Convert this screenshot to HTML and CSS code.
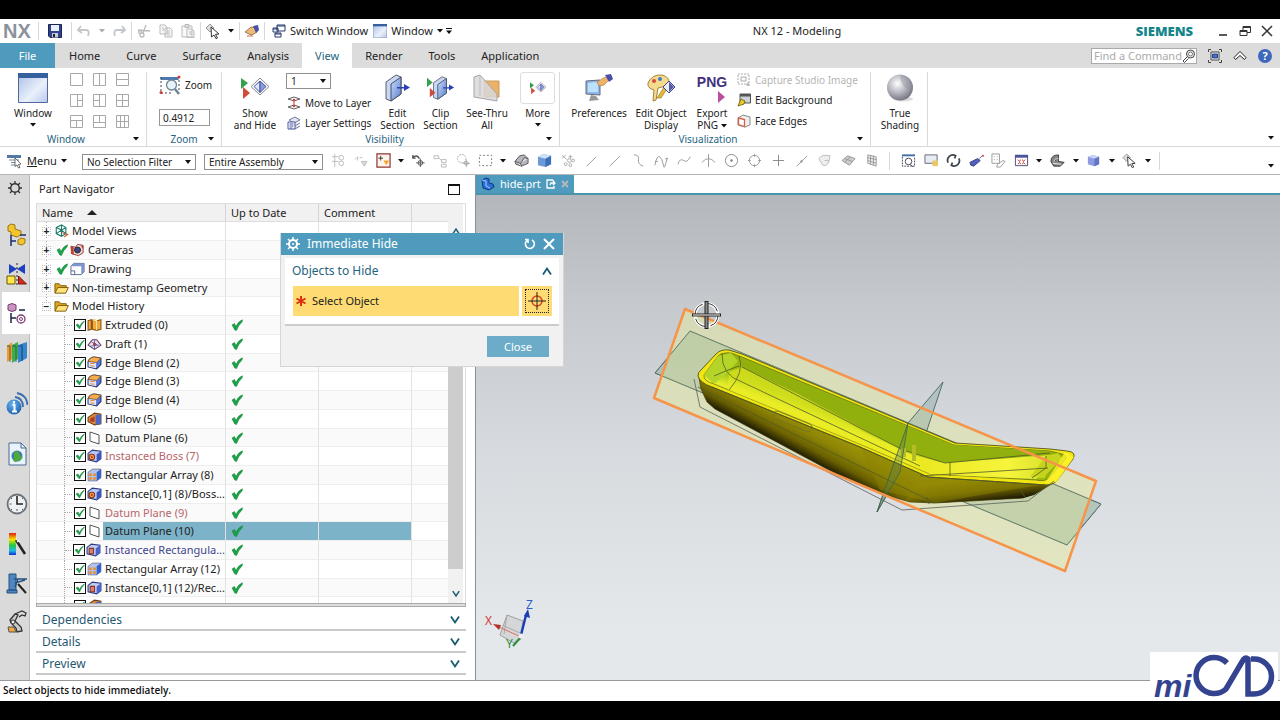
FILE: index.html
```html
<!DOCTYPE html>
<html lang="en">
<head>
<meta charset="utf-8">
<title>NX 12 - Modeling</title>
<link rel="stylesheet" href="styles.css">
</head>
<body>
<svg class="defs" aria-hidden="true">
  <defs>
    <linearGradient id="gWin" x1="0" y1="0" x2="1" y2="1"><stop offset="0" stop-color="#a9bfe6"/><stop offset=".6" stop-color="#eaf0fb"/><stop offset="1" stop-color="#b7c8ea"/></linearGradient>
    <linearGradient id="gBlue" x1="0" y1="0" x2="1" y2="1"><stop offset="0" stop-color="#c9dcf8"/><stop offset="1" stop-color="#5b7fd0"/></linearGradient>
    <linearGradient id="gRain" x1="0" y1="0" x2="0" y2="1"><stop offset="0" stop-color="#e02010"/><stop offset=".3" stop-color="#f5e500"/><stop offset=".55" stop-color="#28c840"/><stop offset=".8" stop-color="#20b8e8"/><stop offset="1" stop-color="#1030d0"/></linearGradient>
    <radialGradient id="gBall" cx=".4" cy=".35" r=".7"><stop offset="0" stop-color="#fff"/><stop offset=".45" stop-color="#bfc0c8"/><stop offset="1" stop-color="#6d6e78"/></radialGradient>
    <radialGradient id="gInfo" cx=".4" cy=".3" r=".8"><stop offset="0" stop-color="#6bb4ee"/><stop offset="1" stop-color="#1258ac"/></radialGradient>
  </defs>
  <symbol id="caret" viewBox="0 0 6 4"><path d="M0 0h6L3 3.500z" fill="#111"/></symbol>
  <symbol id="tick" viewBox="0 0 12 12"><path d="M1 6l2.500-1.500L5 7.500Q7 2.500 11.500.8L11 3Q7.500 6 5.500 11.500L3.800 11z" fill="#19a447" stroke="#0d7a30" stroke-width=".5"/></symbol>
  <symbol id="folder" viewBox="0 0 16 14"><path d="M1 12V2.500h4.500l1.500 2h6V7" fill="#e0a71c" stroke="#7c5a0c"/><path d="M1 12.500L4 6.500h11.300L12.500 12.500z" fill="#ffe27a" stroke="#7c5a0c"/></symbol>
  <symbol id="views" viewBox="0 0 16 16"><path d="M2 4l6-3 5 3v7l-5 3-6-3zM2 4l6 3 5-3M8 1v13M2 11l6-4 5 4" fill="none" stroke="#1e7d6c" stroke-width="1.300"/><path d="M9 10l6 2-4 3" fill="none" stroke="#d1572f" stroke-width="1.300"/></symbol>
  <symbol id="camera" viewBox="0 0 16 14"><path d="M1 3l5 1 2-3 6 1v8l-5 3-7-2z" fill="#f0d7d2" stroke="#923a3a"/><circle cx="8" cy="7" r="3.200" fill="#3b4585" stroke="#222"/><path d="M1 3v8l3 1V4zM11 2l3 1v3" fill="#c1402f"/></symbol>
  <symbol id="drawing" viewBox="0 0 16 14"><path d="M1 4l3-3h11v9l-3 3H1z" fill="#fff" stroke="#56648f"/><path d="M1 4l3-3h11l-3 3zM12 4l3-3v9l-3 3z" fill="#7c96cf"/><path d="M1 9h4v4" fill="none" stroke="#56648f"/></symbol>
  <symbol id="extrude" viewBox="0 0 14 12"><path d="M1 2l3-1v9l-3 1zM5 1l4 1v9l-4-1zM9 2l4-1v9l-4 1z" fill="#f5a93c" stroke="#8c5413"/><path d="M5 1l4 1v9" fill="none" stroke="#fff2b0"/></symbol>
  <symbol id="draft" viewBox="0 0 14 12"><path d="M1 7l4-5h4l4 5-6 4z" fill="#e9e7f6" stroke="#6d3d56"/><path d="M7 11V2M4 4l6 3M3 8l8-1" stroke="#5a5aa8" stroke-width=".8"/><circle cx="7" cy="6" r="1.500" fill="#a83c48"/></symbol>
  <symbol id="blend" viewBox="0 0 14 13"><path d="M1 5Q3 1 7 1l6 1v6l-4 4-8-2z" fill="#5876da" stroke="#26346c"/><path d="M1 5Q3 1 7 1l6 1-4 4z" fill="#f7ad4b" stroke="#7a4a18" stroke-width=".6"/><path d="M1.500 5.500l7 1v5l-7-1.500z" fill="#dfe5fc"/><path d="M3 7h4M3 9l4 .500" stroke="#e5903a"/></symbol>
  <symbol id="hollow" viewBox="0 0 14 13"><path d="M1 5l6-4 6 1v9l-6 1-6-3z" fill="#e08b35" stroke="#6b3d16"/><path d="M8 3l5-1v9l-5 1z" fill="#4a64c8"/><path d="M3 6l4-2v5H3z" fill="#b03a24"/></symbol>
  <symbol id="plane" viewBox="0 0 14 14"><path d="M2.500 1l9 3v9l-9-3z" fill="#fff" stroke="#555"/></symbol>
  <symbol id="boss" viewBox="0 0 14 13"><path d="M1 4l4-3 8 1v7l-4 3-8-2z" fill="#b9c7f2" stroke="#2c3c86"/><path d="M9 5l4-3v7l-4 3z" fill="#3b54be"/><circle cx="4.500" cy="7.500" r="2.600" fill="#f5a23f" stroke="#8b3220"/><circle cx="4.500" cy="7.500" r=".9" fill="#b32e20"/></symbol>
  <symbol id="array" viewBox="0 0 14 13"><path d="M1 4l4-3h8v8l-4 3H1z" fill="#b6c2ea" stroke="#66718f" stroke-width=".7"/><path d="M9 4l4-3v8l-4 3z" fill="#2f62cc"/><path d="M2 5h2.500v2.500H2zM5.800 5h2.500v2.500H5.800zM2 8.500h2.500V11H2zM5.800 8.500h2.500V11H5.800z" fill="#e88e2f"/></symbol>
  <symbol id="pad" viewBox="0 0 14 13"><path d="M1 4l4-3 8 1v7l-4 3-8-2z" fill="#c2cdf3" stroke="#2c3c86"/><path d="M9 5l4-3v7l-4 3z" fill="#4a64cc"/><path d="M3 5h4v5H3z" fill="#d88478" stroke="#8b3220"/></symbol>
  <symbol id="window" viewBox="0 0 30 30"><path d="M.5.500h29v29H.5z" fill="url(#gWin)" stroke="#54689c"/><path d="M0 0h30v5H0z" fill="#365f9e"/></symbol>
  <symbol id="hide" viewBox="0 0 28 22"><path d="M0 1l7 5-7 6z" fill="#34a04c"/><path d="M2 10l7 6-7 6z" fill="#cf4c3a"/><path d="M10 9.500L19 1l9 8.500L19 18z" fill="#fff" stroke="#888"/><path d="M13 9.500L19 4v11.500z" fill="#dfe6fb" stroke="#4453a2"/><path d="M19 4l6 5.500-6 6z" fill="#8b9bd8" stroke="#4453a2"/></symbol>
  <symbol id="section" viewBox="0 0 26 28"><path d="M1 8l10-7 5 2v17L6 27l-5-2z" fill="#c8d7f2" stroke="#5c6270"/><path d="M6 10l10-7v17L6 27z" fill="url(#gBlue)" stroke="#444c66"/><path d="M12 13h7v-3l6 3.500-6 3.500v-2.500h-7z" fill="#2d3fb4"/></symbol>
  <symbol id="layers" viewBox="0 0 14 14"><path d="M1 3l6-2 6 2-6 2zM1 11l6-2 6 2-6 2z" fill="#eef0f4" stroke="#666"/><path d="M7 3v8M5 5l2-2 2 2M5 9l2 2 2-2" fill="none" stroke="#c03b30"/></symbol>
  <symbol id="layerset" viewBox="0 0 14 14"><path d="M2 4l6-3 5 3-6 3zM2 7l6 3 5-3M2 10l6 3 5-3" fill="#e2e5f2" stroke="#757b99"/><path d="M1 6h7v7H1z" fill="#fff" stroke="#4a56a0"/><path d="M2.500 8h4M2.500 10h4M2.500 12h3" stroke="#4a56a0"/></symbol>
  <symbol id="undo" viewBox="0 0 14 12"><path d="M4 1L1 5l4 3M1.500 5H9q4 0 2 6" fill="none" stroke="#c3c7cc" stroke-width="1.800"/></symbol>
  <symbol id="pick" viewBox="0 0 16 16"><path d="M1 5l4-4 4 4-4 4z" fill="#ddd" stroke="#999"/><path d="M6 4l8 7-3.500.300 2 3.700-1.500.700-2-3.700L6.500 14z" fill="#fff" stroke="#333"/></symbol>
  <symbol id="cube" viewBox="0 0 16 16"><path d="M1 4l6-3 8 2v9l-6 3-8-2z" fill="#6c9ad9"/><path d="M1 4l6-3 8 2-6 3z" fill="#cfe1f8"/><path d="M9 6l6-3v9l-6 3z" fill="#3c6fba"/></symbol>
  <symbol id="magnify" viewBox="0 0 14 14"><circle cx="8.500" cy="5" r="4" fill="#eee" stroke="#444"/><circle cx="8.500" cy="5" r="2" fill="#fff" stroke="#444" stroke-width=".7"/><path d="M5 8l-4 4 1.500 1.500L6.500 9.500" fill="#fff" stroke="#444"/></symbol>
  <symbol id="swirl" viewBox="0 0 14 14"><path d="M2 9A5 5 0 0 1 9 2.500L8 5M12 5A5 5 0 0 1 5 11.500L6 9" fill="none" stroke="#39434d" stroke-width="1.600"/></symbol>
  <symbol id="vee" viewBox="0 0 10 8"><path d="M1 .5l4 6 4-6" fill="none" stroke="#165a72" stroke-width="1.800"/></symbol>
</svg>

<div class="app">
  <header class="titlebar">
    <span class="nx">NX</span>
    <i class="sep"></i>
    <button class="slot wide" aria-label="Save"><svg class="i14" viewBox="0 0 14 14"><path d="M.5.500h13v13H2l-1.500-1.500z" fill="#31438e" stroke="#1c2450"/><path d="M3 1h8v6H3z" fill="#e9effb"/><path d="M4 9h6v4.500H4z" fill="#c7cbe0"/><path d="M5 10h2v3H5z" fill="#222"/></svg></button>
    <i class="sep"></i>
    <button class="slot" aria-label="Undo"><svg class="i14"><use href="#undo"/></svg></button>
    <button class="drop" aria-label="Undo list"><svg class="caret pale"><use href="#caret"/></svg></button>
    <button class="slot" aria-label="Redo"><svg class="i14 flip"><use href="#undo"/></svg></button>
    <i class="sep"></i>
    <button class="slot" aria-label="Cut"><svg class="i14" viewBox="0 0 14 14" fill="none" stroke="#bbb" stroke-width="1.300"><path d="M9 1L6 9M1 6l12 1"/><circle cx="5" cy="11" r="2"/><circle cx="3" cy="8" r="1.500"/></svg></button>
    <button class="slot" aria-label="Copy"><svg class="i14" viewBox="0 0 14 14" fill="#f8f8f8" stroke="#bbb"><path d="M1 1h5l2 2v7H1zM6 4h5l2 2v7H6zM8 7h3M8 9h3M8 11h3M3 4h2M3 6h2"/></svg></button>
    <button class="slot" aria-label="Paste"><svg class="i14" viewBox="0 0 14 14" fill="#f8f8f8" stroke="#bbb"><path d="M1 2h10v11H1zM4 .5h4v3H4zM6 5h5l2 2v6.500H6zM8 8h3M8 10h3"/></svg></button>
    <i class="sep"></i>
    <button class="slot" aria-label="Selection mode"><svg class="i16"><use href="#pick"/></svg></button>
    <button class="drop" aria-label="Selection modes"><svg class="caret"><use href="#caret"/></svg></button>
    <i class="sep"></i>
    <button class="slot" aria-label="Touch mode"><svg class="i14" viewBox="0 0 14 12"><path d="M0 7l6-5 5 1 1 4-5 3-3-1z" fill="#efba7a" stroke="#76502a" stroke-width=".7"/><path d="M8 1l5-1 1 5-3 3z" fill="#4a51a8"/><path d="M2 11h6" stroke="#e06a30"/></svg></button>
    <i class="sep"></i>
    <button class="textbtn first"><svg class="i14" viewBox="0 0 14 14" fill="#fff" stroke="#27386f"><path d="M5 1h8v6H5zM1 4h5v4H1zM3 9h6v4H3z"/><path d="M5 2h8M1 5h5M3 10h6"/></svg>Switch Window</button>
    <button class="textbtn"><svg class="i14"><use href="#window"/></svg>Window<svg class="caret"><use href="#caret"/></svg></button>
    <button class="drop" aria-label="Customize"><svg class="i8" viewBox="0 0 8 8"><path d="M1 1.500h6" stroke="#111"/><path d="M1 3.500h6L4 7z" fill="#111"/></svg></button>
    <h1 class="apptitle">NX 12 - Modeling</h1>
    <span class="brand">SIEMENS</span>
    <div class="winctl">
      <button aria-label="Minimize"><svg class="i12" viewBox="0 0 12 12"><path d="M2 10h8" stroke="#222" stroke-width="1.500"/></svg></button>
      <button aria-label="Restore"><svg class="i12" viewBox="0 0 12 12" fill="none" stroke="#333"><path d="M1 5.500h7v5H1zM1 6.500h7M4 5V1.500h7.500v6H8M4 2.500h7"/></svg></button>
      <button aria-label="Close"><svg class="i12" viewBox="0 0 12 12"><path d="M1 1l10 10M11 1L1 11" stroke="#333" stroke-width="1.500"/></svg></button>
    </div>
  </header>

  <nav class="tabs">
    <button class="tab file">File</button>
    <button class="tab">Home</button><button class="tab">Curve</button><button class="tab">Surface</button><button class="tab">Analysis</button><button class="tab active">View</button><button class="tab">Render</button><button class="tab">Tools</button><button class="tab">Application</button>
    <div class="tabtools">
      <div class="search"><input type="text" placeholder="Find a Command" aria-label="Find a Command"><svg class="i14"><use href="#magnify"/></svg></div>
      <button aria-label="Full screen"><svg class="i14" viewBox="0 0 14 14" fill="none" stroke="#444"><path d="M.5 3V.5H3M11 .5h2.500V3M13.500 11v2.500H11M3 13.500H.5V11"/><path d="M3 3h8v8H3z" fill="#fff"/><path d="M4.500 5h5v4h-5z" fill="#4d6fb8" stroke="#27408a"/></svg></button>
      <button aria-label="Minimize ribbon"><svg class="i14" viewBox="0 0 14 14"><path d="M1 8.500l6-6 6 6-1.500 2L7 6.500l-4.500 4z" fill="#fff" stroke="#222"/></svg></button>
      <button class="help" aria-label="Help">?</button>
    </div>
  </nav>

  <section class="ribbon">
    <div class="group g-window">
      <div class="gbody">
        <button class="big w50"><span class="pic"><svg class="i30"><use href="#window"/></svg></span>Window<svg class="caret low"><use href="#caret"/></svg></button>
        <div class="layouts">
          <svg viewBox="0 0 13 13"><path d="M.5.500h12v12H.5z"/></svg><svg viewBox="0 0 13 13"><path d="M.5.500h12v12H.5zM6.500 0v13"/></svg><svg viewBox="0 0 13 13"><path d="M.5.500h12v12H.5zM0 6.500h13"/></svg>
          <svg viewBox="0 0 13 13"><path d="M.5.500h12v12H.5zM7.500 0v13M7.500 6.500H13"/></svg><svg viewBox="0 0 13 13"><path d="M.5.500h12v12H.5zM6.500 0v13M0 6.500h6"/></svg><svg viewBox="0 0 13 13"><path d="M.5.500h12v12H.5zM6.500 0v13M0 6.500h13"/></svg>
          <svg viewBox="0 0 13 13"><path d="M.5.500h12v12H.5zM0 5.500h13M6.500 6v7"/></svg><svg viewBox="0 0 13 13"><path d="M.5.500h12v12H.5zM0 7.500h13M6.500 0v7"/></svg><svg viewBox="0 0 13 13"><path d="M.5.500h12v12H.5zM4.500 0v13M8.500 0v13M0 6.500h13"/></svg>
        </div>
      </div>
      <div class="glabel">Window<svg class="caret"><use href="#caret"/></svg></div>
    </div>
    <div class="group g-zoom">
      <div class="gbody col">
        <button class="row zoomrow"><svg class="i20" viewBox="0 0 21 20"><path d="M1 2h18v3H1z" fill="#4d79ae"/><path d="M1.500 2v16h12M19.500 5v10" fill="none" stroke="#445" stroke-dasharray="2 2"/><circle cx="12" cy="10" r="5" fill="#e8f2f8" stroke="#6f8594" stroke-width="1.300"/><path d="M15.500 14l4 5" stroke="#6f8594" stroke-width="2.500"/><circle cx="19.500" cy="2" r="1.500" fill="#d23b30"/><circle cx="1.500" cy="17.500" r="1.500" fill="#d23b30"/></svg>Zoom</button>
        <input class="zoomval" type="text" value="0.4912" aria-label="Zoom factor">
      </div>
      <div class="glabel">Zoom<svg class="caret"><use href="#caret"/></svg></div>
    </div>
    <div class="group g-vis">
      <div class="gbody">
        <button class="big w50"><span class="pic"><svg class="i28"><use href="#hide"/></svg></span><span>Show<br>and Hide</span></button>
        <div class="col layercol">
          <span class="selwrap layer"><select aria-label="Work layer"><option>1</option></select></span>
          <button class="row"><svg class="i14"><use href="#layers"/></svg>Move to Layer</button>
          <button class="row"><svg class="i14"><use href="#layerset"/></svg>Layer Settings</button>
        </div>
        <button class="big w43"><span class="pic"><svg class="i28"><use href="#section"/></svg></span><span>Edit<br>Section</span></button>
        <button class="big w43"><span class="pic"><svg class="i28" viewBox="0 0 30 28"><svg x="6" width="24" height="28"><use href="#section"/></svg><path d="M0 3l6 5-6 5z" fill="#34a04c"/><path d="M3 14l6 5-6 5z" fill="#cf4c3a"/></svg></span><span>Clip<br>Section</span></button>
        <button class="big w50"><span class="pic"><svg class="i28" viewBox="0 0 28 28"><path d="M11 7h15v16H11z" fill="#ecb368" stroke="#c99a5a"/><path d="M1 3l6-2 17 19v7L1 23z" fill="#d8d8da" fill-opacity=".85" stroke="#a5a5a8"/><path d="M7 1v21" stroke="#bbb"/></svg></span><span>See-Thru<br>All</span></button>
        <button class="big more"><span class="pic boxed"><svg class="i16"><use href="#hide"/></svg></span>More<svg class="caret low"><use href="#caret"/></svg></button>
      </div>
      <div class="glabel">Visibility<svg class="caret"><use href="#caret"/></svg></div>
    </div>
    <div class="group g-viz">
      <div class="gbody">
        <button class="big w62"><span class="pic"><svg class="i28" viewBox="0 0 28 28"><path d="M1 7l14-1v15l-14-1z" fill="#8db9ea" stroke="#667"/><path d="M3 9l10-1v10L3 18z" fill="#bfe0fa"/><path d="M6 21l5 1 3 4-10 1z" fill="#999"/><path d="M12 8l8-5 4 3-5 5-5 1z" fill="#efb26a" stroke="#a87439" stroke-width=".6"/><path d="M20 1l6-1 2 5-4 3z" fill="#484fa6"/></svg></span>Preferences</button>
        <button class="big w62"><span class="pic"><svg class="i28" viewBox="0 0 28 28"><path d="M1 9Q5 0 15 1q8 2 7 9l-7 3-4 1-2 12-3 1 1-11Q0 14 1 9z" fill="#f4dc8c" stroke="#a3823a"/><circle cx="7" cy="7" r="2" fill="#d8493c"/><circle cx="13" cy="5" r="2" fill="#3f7ad0"/><path d="M10 24l7-11 3 2-6 9z" fill="#e3bb3a" stroke="#8b6d1f" stroke-width=".6"/><path d="M16 13l6-6 6 6-6 6z" fill="#eee" stroke="#444a8c"/><path d="M22 8v10l5-5z" fill="#555cab"/></svg></span><span>Edit Object<br>Display</span></button>
        <button class="big w40"><span class="pic png"><b>PNG</b><svg class="i12" viewBox="0 0 12 12"><path d="M3 0l7 6-7 6z" fill="#b8509f"/></svg></span><span>Export<br>PNG <svg class="caret"><use href="#caret"/></svg></span></button>
        <div class="col vizcol">
          <button class="row off" disabled><svg class="i14" viewBox="0 0 14 14" fill="none" stroke="#aaa"><path d="M1 1h11v10H1z" stroke-dasharray="2 1"/><path d="M4 4h5v4H4zM11 9v4M9 12h4"/></svg>Capture Studio Image</button>
          <button class="row"><svg class="i14" viewBox="0 0 14 14"><path d="M3 1h10.500v9H3z" fill="#ccd2d6" stroke="#555"/><path d="M3 1h10.500v2.500H3z" fill="#555"/><path d="M1 13l3-7 4 2-1 3z" fill="#e9cb2d" stroke="#826b12"/></svg>Edit Background</button>
          <button class="row"><svg class="i14" viewBox="0 0 14 14"><path d="M1 4l5-3 7 2v8l-5 2-7-2z" fill="#eee" stroke="#888"/><path d="M1.500 4l6 1.500v7l-6-2z" fill="#fff" stroke="#d56347" stroke-width="1.300"/></svg>Face Edges</button>
        </div>
      </div>
      <div class="glabel">Visualization<svg class="caret"><use href="#caret"/></svg></div>
    </div>
    <div class="group g-true">
      <div class="gbody"><button class="big w50"><span class="pic"><svg class="i28" viewBox="0 0 28 28"><ellipse cx="17" cy="25" rx="10" ry="2.500" fill="#ddd"/><circle cx="14" cy="13.500" r="13" fill="url(#gBall)"/><path d="M14 1a13 13 0 0 1 13 13q-11 4-13-13" fill="#888a98" opacity=".35"/></svg></span><span>True<br>Shading</span></button></div>
    </div>
    <button class="overflow" aria-label="Ribbon options"><svg class="caret"><use href="#caret"/></svg></button>
  </section>

  <section class="selbar">
    <button class="textbtn menu"><svg class="i16" viewBox="0 0 16 14"><path d="M0 1h14v3H0z" fill="#5278a5"/><path d="M2 6h10M4 8.500h8M4 11h8" stroke="#789"/><path d="M8 4l6 6-2.500.500 1.500 3-1.500.500-1.500-3-2 1.500z" fill="#fff" stroke="#333" stroke-width=".7"/></svg><span><u>M</u>enu</span><svg class="caret"><use href="#caret"/></svg></button>
    <span class="selwrap filter"><select aria-label="Selection filter"><option>No Selection Filter</option></select></span>
    <span class="selwrap scope"><select aria-label="Selection scope"><option>Entire Assembly</option></select></span>
    <div class="run r1">
      <svg viewBox="0 0 16 16" stroke="#bbb" fill="none"><path d="M4 1v14M4 4h4M4 9h4M1 4h3M1 9h3"/><circle cx="11" cy="5" r="2.500"/><circle cx="11" cy="11" r="2.500"/></svg>
      <svg viewBox="0 0 16 16" stroke="#bbb" fill="none"><path d="M2 7l3-3M5 4v4M7 5h3"/><path d="M9 9h6l-3 5z" fill="#ddd"/></svg>
      <svg viewBox="0 0 16 16"><path d="M1 1h14v14H1z" fill="#fff4ec" stroke="#8f3730" stroke-width="1.300"/><path d="M5 3v5M2.500 5.500h5" stroke="#333"/><path d="M8 8h6l-3 5z" fill="#f5a425"/></svg>
      <svg class="caret"><use href="#caret"/></svg>
      <svg viewBox="0 0 16 16" fill="none" stroke="#555"><path d="M2 5q4-4 7 1M2 2v3.500h3" stroke-width="1.500"/><path d="M10 6v9M5.500 10.500h9"/><circle cx="10" cy="10.500" r="2.500"/></svg>
      <svg viewBox="0 0 16 16" fill="none" stroke="#bbb"><path d="M1 3h5v3H1zM6 5l3 3M9 7h5v3H9zM9 12h5v3H9z"/></svg>
      <svg viewBox="0 0 16 16" fill="none" stroke="#aaa"><circle cx="6" cy="6" r="4.500" stroke-dasharray="2 1"/><path d="M11 7v8M7 11h8"/><circle cx="11" cy="11" r="2"/></svg>
      <svg viewBox="0 0 16 16" fill="none" stroke="#777"><path d="M1.500 2.500h13v11h-13z" stroke-dasharray="2 2"/></svg>
      <svg class="caret"><use href="#caret"/></svg>
    </div>
    <div class="run r2">
      <svg viewBox="0 0 16 16" fill="#b7b4bd" stroke="#555"><path d="M1 9l5-6 5-1 4 4v5l-7 3-6-2z"/><path d="M1 9l6 2 1 3M7 11l4-6 4 1" fill="#ddd"/></svg>
      <svg viewBox="0 0 16 16"><use href="#cube"/></svg>
      <svg viewBox="0 0 16 16" fill="none" stroke="#aaa"><path d="M1 2l5 5M5 2L1 6M10 2v4M8 4h4"/><circle cx="9" cy="8" r="2"/><circle cx="13" cy="8" r="1.500"/><circle cx="5" cy="12" r="1.500"/><circle cx="10" cy="13" r="1.500"/></svg>
      <svg viewBox="0 0 16 16" fill="none" stroke="#999"><path d="M3 14L13 4"/></svg>
      <svg viewBox="0 0 16 16" fill="none" stroke="#999"><path d="M3 14L14 3"/></svg>
      <svg viewBox="0 0 16 16" fill="none" stroke="#999"><path d="M3 2q6 0 5 5t5 7"/></svg>
      <svg viewBox="0 0 16 16" fill="none" stroke="#999"><path d="M1 13Q3 2 6 4t4 9 4-8"/><path d="M1 9h3M12 6h3"/></svg>
      <svg viewBox="0 0 16 16" fill="none" stroke="#999"><path d="M1 12q2-7 6-4t7-4"/></svg>
      <svg viewBox="0 0 16 16" fill="none" stroke="#999"><path d="M8 1v14M1 10q7-8 14 0"/></svg>
      <svg viewBox="0 0 16 16" fill="none" stroke="#888"><circle cx="8" cy="8" r="6.500"/><circle cx="8" cy="8" r="1" fill="#888"/></svg>
      <svg viewBox="0 0 16 16" fill="none" stroke="#999"><circle cx="8" cy="8" r="5.500"/><path d="M8 1v3M8 12v3M1 8h3M12 8h3"/></svg>
      <svg viewBox="0 0 16 16" fill="none" stroke="#888"><path d="M8 2v12M2 8h12"/></svg>
      <svg viewBox="0 0 16 16" fill="none" stroke="#999"><path d="M3 14L14 3"/><circle cx="8" cy="9" r="1"/></svg>
      <svg viewBox="0 0 16 16" fill="#eee" stroke="#bbb"><path d="M2 6q3-5 12-3l-2 8q-3 4-6 2z"/><path d="M8 8h5"/></svg>
      <svg viewBox="0 0 16 16" fill="#ccc" stroke="#999"><path d="M1 8l6-5 8 3-6 7zM4 6l8 3M4 10l6-6"/></svg>
      <svg viewBox="0 0 16 16" fill="#eee" stroke="#999"><path d="M4 2l9 2v10l-9-3zM7 3v9M10 3v10M4 5l9 2M4 8l9 3"/></svg>
    </div>
    <i class="sep"></i>
    <div class="run r3">
      <svg viewBox="0 0 16 16" fill="none" stroke="#445"><path d="M1 2.500h14" stroke="#3f6ca5" stroke-width="2"/><path d="M1.500 4v10h13V4" stroke-dasharray="2 1"/><circle cx="8" cy="9" r="3.500"/><path d="M10 12l3 3"/></svg>
      <svg viewBox="0 0 16 16"><path d="M1 2h13v9H1z" fill="#e6ebf4" stroke="#667"/><path d="M9 8h6v6H9z" fill="#ecc66a"/></svg>
      <svg viewBox="0 0 16 16"><use href="#swirl"/></svg>
      <svg viewBox="0 0 16 16"><path d="M1 10l8-4 3 2-7 6-3-1z" fill="#5560c0" stroke="#333a80"/><path d="M11 6l4-4" stroke="#666"/><circle cx="15" cy="3" r="1" fill="#c33"/></svg>
      <svg viewBox="0 0 16 16" fill="none" stroke="#999"><path d="M1 1h8v10H1zM3 4h1M6 4h1M3 7h1M6 7h1M7 12l6-4 2 1-5 6H6z"/></svg>
      <svg viewBox="0 0 16 16"><path d="M1.500 2.500h13v11h-13z" fill="#fff" stroke="#454b7c"/><path d="M1 2h14v3H1z" fill="#4b539b"/><path d="M4 7l2 2 1-2M9 7l1 2 2-2M4 12l2-2 1 2M9 12l1-2 2 2" stroke="#c5382c" fill="none"/></svg>
      <svg class="caret"><use href="#caret"/></svg>
      <svg viewBox="0 0 16 16"><path d="M1 9q0-7 8-7v7l6 1-4 4H4z" fill="#888" stroke="#333"/><path d="M4 9q1-3 5-3M3 11l9 1" stroke="#eee"/></svg>
      <svg class="caret"><use href="#caret"/></svg>
      <svg viewBox="0 0 16 16"><path d="M2 4l5-2 7 2v8l-5 2-7-2z" fill="#8d9be0"/><path d="M2 4l5-2 7 2-5 2z" fill="#cdd4f6"/><path d="M9 6l5-2v8l-5 2z" fill="#6474c6"/></svg>
      <svg class="caret"><use href="#caret"/></svg>
      <svg viewBox="0 0 16 16"><use href="#pick"/></svg>
      <svg class="caret"><use href="#caret"/></svg>
    </div>
    <i class="sep"></i>
    <button class="overflow" aria-label="Toolbar options"><svg class="caret"><use href="#caret"/></svg></button>
  </section>

  <main class="work">
    <aside class="rail">
      <button aria-label="Settings"><svg class="i14" viewBox="0 0 14 14"><circle cx="7" cy="7" r="4.300" fill="none" stroke="#333" stroke-width="1.500"/><path d="M7 0v3M7 11v3M0 7h3M11 7h3M2 2l2 2M10 10l2 2M12 2l-2 2M4 10l-2 2" stroke="#333" stroke-width="1.300"/></svg></button>
      <div class="railgrp a">
        <button aria-label="Assembly Navigator"><svg class="i22" viewBox="0 0 22 24"><path d="M2 3l3-2 4 1v4l6 2v4l-4 2-6-2v-3l-3-1z" fill="#f3c52e" stroke="#9a7413"/><path d="M5 12v11M5 18h5M14 12h6" stroke="#1b2c6f" stroke-width="1.500"/><path d="M12 17l3-2 4 1v4l-3 2-4-1z" fill="#f3c52e" stroke="#9a7413"/></svg></button>
        <button aria-label="Constraint Navigator"><svg class="i22" viewBox="0 0 22 24"><path d="M3 2l8 5-8 5zM19 2l-8 5 8 5z" fill="#1d3fc0"/><path d="M11 1v22" stroke="#222" stroke-dasharray="2 2"/><path d="M1 14h8v8H1z" fill="#ffe64a" stroke="#6b5700"/><path d="M12.500 14l8 8h-8z" fill="#d42a1b" stroke="#7a1710"/></svg></button>
        <button class="on" aria-label="Part Navigator"><svg class="i22" viewBox="0 0 22 24"><path d="M2 4q4-3 8 0v5q-4 3-8 0z" fill="#c996c1" stroke="#7b3a6f"/><path d="M13 9h6M5 12v10M5 17h5" stroke="#1b2247" stroke-width="1.500"/><circle cx="15" cy="18" r="4" fill="#fff" stroke="#7b3a6f" stroke-width="1.300"/><circle cx="15" cy="18" r="1.500" fill="none" stroke="#7b3a6f"/></svg></button>
        <button aria-label="Reuse Library"><svg class="i22" viewBox="0 0 22 22"><path d="M1 5l5-4v17l-5 3z" fill="#f09a2a"/><path d="M6 4l6-3v17l-6 4z" fill="#3fae45"/><path d="M12 4l9-3v16l-9 5z" fill="#3685cf"/><path d="M1 5h3v16M6 5h4v16M12 5h4v15M16 3v17" fill="none" stroke="#1c5078" stroke-width=".8"/></svg></button>
      </div>
      <div class="railgrp b">
        <button aria-label="HD3D Tools"><svg class="i22" viewBox="0 0 22 24"><circle cx="8" cy="15" r="7.500" fill="url(#gInfo)"/><path d="M8 9v2.500M6.500 13H8.500v6M6 19.500h5" stroke="#fff" stroke-width="2" fill="none"/><path d="M9 5q8 1 8 10M11 1q10 2 10.500 12" fill="none" stroke="#3a6fb0" stroke-width="1.800"/></svg></button>
        <button aria-label="Web Browser"><svg class="i22" viewBox="0 0 22 24"><path d="M3 1h12l5 5v17H3z" fill="#eaf3fb" stroke="#456a92"/><path d="M15 1v5h5" fill="none" stroke="#456a92"/><circle cx="11" cy="14" r="5.500" fill="#3f7ab5"/><path d="M8 10q4-2 5 1t3 4-4 4-4-4z" fill="#4faa3c"/></svg></button>
        <button aria-label="History"><svg class="i22" viewBox="0 0 22 22"><circle cx="11" cy="11" r="9.500" fill="#eef2f5" stroke="#6b737b" stroke-width="1.800"/><path d="M11 3v8h6" fill="none" stroke="#222" stroke-width="1.600"/><path d="M3.500 11h2M11 18v-2M17 5l-1 1M5 5l1 1M5 17l1-1M17 17l-1-1" stroke="#555"/></svg></button>
      </div>
      <div class="railgrp c">
        <button aria-label="System Materials"><svg class="i22" viewBox="0 0 22 24"><path d="M3 1h7v22H3z" fill="url(#gRain)"/><path d="M10 8l9 14" stroke="#222" stroke-width="2.500"/><path d="M10 5l1 3 3 1-3 1" fill="#fff" stroke="#eee"/></svg></button>
        <button aria-label="Process Studio"><svg class="i22" viewBox="0 0 22 24"><path d="M3 3h7v16H3zM1 19h10v3H1z" fill="#4f86c2" stroke="#27527f"/><path d="M8 8h13M9 12l10-3M12 8l-3 8" stroke="#27527f" stroke-width="1.500"/><path d="M12 13l8 9" stroke="#222" stroke-width="2"/></svg></button>
        <button aria-label="Machining Wizards"><svg class="i22" viewBox="0 0 22 24"><path d="M9 4l7-3 4 2-1 3-3-1-3 2" fill="#ddd" stroke="#333" stroke-width="1.300"/><path d="M9 4l3 1-3 6 6 6 1 4-5 1-1-4-5-5-1-3z" fill="#ccc" stroke="#333" stroke-width="1.300"/><circle cx="7" cy="12" r="2" fill="#eee" stroke="#333"/><path d="M2 17h6l2 5H3z" fill="#f0a93a" stroke="#555"/></svg></button>
      </div>
    </aside>

    <section class="nav">
      <div class="navhead"><h2>Part Navigator</h2><button aria-label="Maximize panel" class="maxbox"></button></div>
      <div class="tree">
        <table>
          <colgroup><col class="c1"><col class="c2"><col class="c3"><col></colgroup>
          <thead><tr><th>Name<svg class="sort" viewBox="0 0 10 6"><path d="M0 6l5-5 5 5z" fill="#222"/></svg></th><th>Up to Date</th><th>Comment</th><th></th></tr></thead>
          <tbody>
            <tr><td><div class="cell top"><button class="exp" aria-label="Expand">+</button><svg class="ic"><use href="#views"/></svg><span>Model Views</span></div></td><td></td><td></td><td></td></tr>
            <tr><td><div class="cell top"><button class="exp" aria-label="Expand">+</button><svg class="tk"><use href="#tick"/></svg><svg class="ic"><use href="#camera"/></svg><span>Cameras</span></div></td><td></td><td></td><td></td></tr>
            <tr><td><div class="cell top"><button class="exp" aria-label="Expand">+</button><svg class="tk"><use href="#tick"/></svg><svg class="ic"><use href="#drawing"/></svg><span>Drawing</span></div></td><td></td><td></td><td></td></tr>
            <tr><td><div class="cell top"><button class="exp" aria-label="Expand">+</button><svg class="ic"><use href="#folder"/></svg><span>Non-timestamp Geometry</span></div></td><td></td><td></td><td></td></tr>
            <tr><td><div class="cell top last"><button class="exp" aria-label="Collapse">−</button><svg class="ic"><use href="#folder"/></svg><span>Model History</span></div></td><td></td><td></td><td></td></tr>
            <tr><td><div class="cell sub"><input type="checkbox" id="f0" checked><svg class="ic"><use href="#extrude"/></svg><label for="f0">Extruded (0)</label></div></td><td><svg class="tk"><use href="#tick"/></svg></td><td></td><td></td></tr>
            <tr><td><div class="cell sub"><input type="checkbox" id="f1" checked><svg class="ic"><use href="#draft"/></svg><label for="f1">Draft (1)</label></div></td><td><svg class="tk"><use href="#tick"/></svg></td><td></td><td></td></tr>
            <tr><td><div class="cell sub"><input type="checkbox" id="f2" checked><svg class="ic"><use href="#blend"/></svg><label for="f2">Edge Blend (2)</label></div></td><td><svg class="tk"><use href="#tick"/></svg></td><td></td><td></td></tr>
            <tr><td><div class="cell sub"><input type="checkbox" id="f3" checked><svg class="ic"><use href="#blend"/></svg><label for="f3">Edge Blend (3)</label></div></td><td><svg class="tk"><use href="#tick"/></svg></td><td></td><td></td></tr>
            <tr><td><div class="cell sub"><input type="checkbox" id="f4" checked><svg class="ic"><use href="#blend"/></svg><label for="f4">Edge Blend (4)</label></div></td><td><svg class="tk"><use href="#tick"/></svg></td><td></td><td></td></tr>
            <tr><td><div class="cell sub"><input type="checkbox" id="f5" checked><svg class="ic"><use href="#hollow"/></svg><label for="f5">Hollow (5)</label></div></td><td><svg class="tk"><use href="#tick"/></svg></td><td></td><td></td></tr>
            <tr><td><div class="cell sub"><input type="checkbox" id="f6" checked><svg class="ic"><use href="#plane"/></svg><label for="f6">Datum Plane (6)</label></div></td><td><svg class="tk"><use href="#tick"/></svg></td><td></td><td></td></tr>
            <tr class="red"><td><div class="cell sub"><input type="checkbox" id="f7" checked><svg class="ic"><use href="#boss"/></svg><label for="f7">Instanced Boss (7)</label></div></td><td><svg class="tk"><use href="#tick"/></svg></td><td></td><td></td></tr>
            <tr><td><div class="cell sub"><input type="checkbox" id="f8" checked><svg class="ic"><use href="#array"/></svg><label for="f8">Rectangular Array (8)</label></div></td><td><svg class="tk"><use href="#tick"/></svg></td><td></td><td></td></tr>
            <tr><td><div class="cell sub"><input type="checkbox" id="f8i" checked><svg class="ic"><use href="#boss"/></svg><label for="f8i">Instance[0,1] (8)/Boss...</label></div></td><td><svg class="tk"><use href="#tick"/></svg></td><td></td><td></td></tr>
            <tr class="red"><td><div class="cell sub"><input type="checkbox" id="f9" checked><svg class="ic"><use href="#plane"/></svg><label for="f9">Datum Plane (9)</label></div></td><td><svg class="tk"><use href="#tick"/></svg></td><td></td><td></td></tr>
            <tr class="sel"><td><div class="cell sub"><input type="checkbox" id="f10" checked><svg class="ic"><use href="#plane"/></svg><label for="f10">Datum Plane (10)</label></div></td><td><svg class="tk"><use href="#tick"/></svg></td><td></td><td></td></tr>
            <tr class="blue"><td><div class="cell sub"><input type="checkbox" id="f11" checked><svg class="ic"><use href="#pad"/></svg><label for="f11">Instanced Rectangula...</label></div></td><td><svg class="tk"><use href="#tick"/></svg></td><td></td><td></td></tr>
            <tr><td><div class="cell sub"><input type="checkbox" id="f12" checked><svg class="ic"><use href="#array"/></svg><label for="f12">Rectangular Array (12)</label></div></td><td><svg class="tk"><use href="#tick"/></svg></td><td></td><td></td></tr>
            <tr><td><div class="cell sub"><input type="checkbox" id="f12i" checked><svg class="ic"><use href="#pad"/></svg><label for="f12i">Instance[0,1] (12)/Rec...</label></div></td><td><svg class="tk"><use href="#tick"/></svg></td><td></td><td></td></tr>
            <tr><td><div class="cell sub"><input type="checkbox" aria-label="Next feature" checked><svg class="ic"><use href="#hollow"/></svg></div></td><td></td><td></td><td></td></tr>
          </tbody>
        </table>
        <div class="scroll"><button aria-label="Scroll up"><svg class="i8 flipv"><use href="#vee"/></svg></button><i class="thumb"></i><button aria-label="Scroll down"><svg class="i8"><use href="#vee"/></svg></button></div>
      </div>
      <div class="splitter"></div>
      <button class="fold">Dependencies<svg class="i10"><use href="#vee"/></svg></button>
      <button class="fold">Details<svg class="i10"><use href="#vee"/></svg></button>
      <button class="fold">Preview<svg class="i10"><use href="#vee"/></svg></button>
    </section>

    <section class="view">
      <div class="doctabs"><div class="doctab"><svg class="i14" viewBox="0 0 14 14"><path d="M1 3l4-2 3 1v4l4 1 1 3-5 3-6-2z" fill="#2a6fd8" stroke="#0e3a86"/><path d="M1 3l4 1v5l4 2" fill="none" stroke="#a9ccff"/></svg><span>hide.prt</span><svg class="i10" viewBox="0 0 10 10" fill="none" stroke="#fff" stroke-width="1.300"><path d="M7 1H1v8h7V7M7 1l1 2M4 6l1-2h4M7 2.500L9 4 7 6"/></svg><button aria-label="Close hide.prt"><svg class="i8" viewBox="0 0 8 8"><path d="M1 1l6 6M7 1L1 7" stroke="#b5b9bc" stroke-width="1.800"/></svg></button></div></div>
      <svg class="canvas" viewBox="476 195 804 485" preserveAspectRatio="xMinYMin slice" role="img" aria-label="Model view">
        <defs>
          <linearGradient id="hull" gradientUnits="userSpaceOnUse" x1="850" y1="436" x2="831" y2="471"><stop offset="0" stop-color="#a29a0c"/><stop offset=".45" stop-color="#8d8405"/><stop offset=".75" stop-color="#6b6100"/><stop offset="1" stop-color="#231f04"/></linearGradient>
          <linearGradient id="bow" gradientUnits="userSpaceOnUse" x1="980" y1="478" x2="983" y2="502"><stop offset="0" stop-color="#9c9008"/><stop offset=".5" stop-color="#7a6f02"/><stop offset="1" stop-color="#1f1b04"/></linearGradient>
          <linearGradient id="wall" gradientUnits="userSpaceOnUse" x1="850" y1="400" x2="835" y2="440"><stop offset="0" stop-color="#92b20c"/><stop offset=".45" stop-color="#a8c814"/><stop offset=".7" stop-color="#e4ec2c"/><stop offset="1" stop-color="#ebe414"/></linearGradient>
          <linearGradient id="prow" x1="0" y1="0" x2="1" y2="0"><stop offset="0" stop-color="#e9e81d"/><stop offset=".7" stop-color="#f6f43c"/><stop offset="1" stop-color="#d8e02a"/></linearGradient>
        </defs>
        <path d="M690 331L1101 504 1067 545 655 373z" fill="#8fa99a" fill-opacity=".35" stroke="#56706a"/>
        <path d="M685 309L1096 481 1065 571 654 398z" fill="#e4e8a2" fill-opacity=".55"/>
        <path d="M690 331L1101 504 1067 545 655 373z" fill="#8db092" fill-opacity=".22" stroke="#5a7468" stroke-width=".8"/>
        <path d="M943 382L908 423 877 512 888 493 927 430z" fill="#86a6a4" fill-opacity=".4" stroke="#52706e"/>
        <path d="M699 378L701 389 707 402 715 409 840 476 882 494 910 502 935 503 1023 498 1034 494 1054 482 930 476z" fill="url(#hull)" stroke="#3d3a12" stroke-width=".7"/>
        <path d="M925 476L1054 483 1034 495 1023 498 935 503 905 501z" fill="url(#bow)"/>
        <path d="M860 446L928 477 1050 483 935 503 880 490z" fill="#8b8203" opacity=".45"/>
        <path d="M698 376Q698 372 701 370L716 354Q721 349 729 350L742 354 955 443 1050 449 1067 451Q1077 452 1073 459L1059 478Q1055 485 1046 485L928 477 860 447 712 387Q700 383 698 376z" fill="#f1e512" stroke="#4e5417" stroke-width=".9"/>
        <path d="M704 375L718 356Q723 352 731 353L742 357 954 445 1050 451 1062 454Q1068 456 1065 460L1049 478Q1045 482 1036 480L930 474 862 445 714 384Q703 381 704 375z" fill="url(#wall)" stroke="#5b6420" stroke-width=".7"/>
        <path d="M704 375L718 356 731 353 738 361 726 374 714 384z" fill="#b4d428"/>
        <path d="M740 358L954 445 1050 451 1055 455 945 463 912 455 860 430 800 395 742 367z" fill="#92b00d"/>
        <path d="M742 367L800 395 903 450 945 463 1048 456 1045 478 930 474 862 445 728 390 729 372z" fill="#eeee22" opacity=".55"/>
        <path d="M912 457L945 463 1050 455 1045 470 1036 479 930 474z" fill="url(#prow)"/>
        <path d="M1046 456l12-3 4 5-17 18-15 1z" fill="#c7d41d"/>
        <path d="M1065 452L1074 457 1057 482 1045 483z" fill="#fff32c" opacity=".8"/>
        <path d="M722 353Q721 375 742 382L920 466M739 356Q745 372 729 390M714 376Q727 370 739 366M742 367L903 450 945 463 1050 453M950 462v14M920 476L1048 468M1046 456v12l-14 10M698 387L935 503M712 387L860 447 928 477 1046 485M927 497l2 7M1021 491l4 6" fill="none" stroke="#525a2a" stroke-width=".8"/>
        <rect x="775" y="410" width="41" height="8" rx="4" transform="rotate(22 775 410)" fill="none" stroke="#6e7126" stroke-width=".8"/>
        <path d="M694 379l6 28L902 510l126-9 26-20" fill="none" stroke="#5b605b" stroke-width=".8"/>
        <path d="M901 448h5v9h-5zM912 445h4v16h-4z" fill="#b4bd25"/>
        <path d="M908 423L895 460 877 512 900 472z" fill="#557d4c" fill-opacity=".35" stroke="#40624a" stroke-width=".8"/>
        <path d="M685 309L1096 481 1065 571 654 398z" fill="none" stroke="#f6944a" stroke-width="2.500" stroke-linejoin="round"/>
        <g fill="none"><circle cx="706.500" cy="315" r="11.500" stroke="#fff" stroke-width="3"/><circle cx="706.500" cy="315" r="11.500" stroke="#333" stroke-dasharray="14 4"/><path d="M706.500 301v28" stroke="#222" stroke-width="4"/><path d="M706.500 302v26" stroke="#888" stroke-width="2"/><path d="M692 315h29" stroke="#222" stroke-width="3"/><path d="M693 315h27" stroke="#fff"/></g>
        <g><path d="M500 635l7-20 16 6-2 18-7 4z" fill="#d4d6d8" stroke="#9da0a3"/><path d="M504 626l16 7M507 615l-3 19" stroke="#aaa" fill="none"/><path d="M521 635l5-20" stroke="#1a3db4" stroke-width="2.500"/><path d="M524 616l4-7 2 9z" fill="#1a3db4"/><path d="M499 627l20 9" stroke="#e06b60"/><path d="M493 624l8 1-2 5z" fill="#b23228"/><path d="M520 638l-7 8" stroke="#2e8c3a" stroke-width="2"/><circle cx="521" cy="636" r="2.500" fill="#eee"/></g>
        <g class="axes"><text x="526" y="609" fill="#2b5fd0">Z</text><text x="485" y="625" fill="#cf3b34">X</text><text x="506" y="648" fill="#2e8c3a">Y</text></g>
      </svg>
    </section>

    <form class="dialog" role="dialog" aria-label="Immediate Hide">
      <div class="dhead"><svg class="i14" viewBox="0 0 14 14"><circle cx="7" cy="7" r="4" fill="none" stroke="#fff" stroke-width="2"/><circle cx="7" cy="7" r="1" fill="#fff"/><path d="M7 0v3M7 11v3M0 7h3M11 7h3M2 2l2 2M10 10l2 2M12 2l-2 2M4 10l-2 2" stroke="#fff" stroke-width="1.500"/></svg><h2>Immediate Hide</h2>
        <button type="button" aria-label="Reset"><svg class="i12" viewBox="0 0 12 12"><path d="M3 2.500A4.500 4.500 0 1 0 8 2M1 1.500h3v3.500" fill="none" stroke="#fff" stroke-width="1.600"/></svg></button>
        <button type="button" aria-label="Close dialog"><svg class="i12" viewBox="0 0 12 12"><path d="M1 1l10 10M11 1L1 11" stroke="#fff" stroke-width="2"/></svg></button></div>
      <div class="dpanel">
        <button type="button" class="dfold">Objects to Hide<svg class="i10 flipv"><use href="#vee"/></svg></button>
        <div class="pickrow"><div class="picklabel"><svg class="i12" viewBox="0 0 12 12"><path d="M6 1v10M1.500 3.500l9 5M1.500 8.500l9-5" stroke="#d9300f" stroke-width="2"/></svg>Select Object</div>
        <button type="button" class="target" aria-label="Select Object"><svg class="i20" viewBox="0 0 20 20"><circle cx="10" cy="10" r="5" fill="none" stroke="#d9431e" stroke-width="1.500"/><path d="M10 1v18M1 10h18" stroke="#222"/></svg></button></div>
      </div>
      <div class="dfoot"><button type="button">Close</button></div>
    </form>
  </main>

  <footer class="status">Select objects to hide immediately.
    <svg class="micad" viewBox="0 0 128 49" role="img" aria-label="miCAD"><text x="4" y="45" class="mi">mi</text><g fill="none" stroke="#34438f" stroke-width="5.500"><path d="M77 11A18 18 0 1 0 76 37L92 10Q95 4 98 7V42H104A17.500 17.500 0 0 0 104 7H101"/></g></svg>
  </footer>
</div>
</body>
</html>
```
FILE: styles.css
```css
* { box-sizing: border-box; }
body { margin: 0; background: #000; font: 11px/14px "Noto Sans", "Open Sans", sans-serif; color: #222; }
button, input, select { font: inherit; color: inherit; margin: 0; }
button { border: 0; padding: 0; background: none; display: flex; align-items: center; justify-content: center; }
h1, h2 { margin: 0; font-size: 11px; font-weight: normal; }
svg { flex: none; display: block; }
.defs { position: absolute; width: 0; height: 0; }

.i8 { width: 8px; height: 8px; }
.i10 { width: 10px; height: 10px; }
.i12 { width: 12px; height: 12px; }
.i14 { width: 14px; height: 14px; }
.i16 { width: 16px; height: 16px; }
.i20 { width: 22px; height: 20px; }
.i22 { width: 22px; height: 24px; }
.i28 { width: 28px; height: 28px; }
.i30 { width: 30px; height: 30px; }
.caret { width: 6px; height: 4px; }
.pale { opacity: .35; }
.flip { transform: scaleX(-1); }
.flipv { transform: scaleY(-1); }
.sep { flex: none; width: 1px; height: 18px; background: #d8d8d8; }

.app { height: 100vh; padding: 19px 0; display: flex; flex-direction: column; }

/* Title bar */
.titlebar { position: relative; display: flex; align-items: center; height: 24px; background: #fff; }
.nx { width: 38px; padding-left: 3px; font: bold 20px/24px "Liberation Sans", sans-serif; color: #8b929b; }
.slot { width: 22px; height: 24px; }
.wide { width: 30px; }
.sep + .slot { margin-left: 1px; }
.slot + .sep { margin-left: 1px; }
.drop { width: 13px; height: 24px; }
.drop + .sep { margin-left: 2px; }
.textbtn { gap: 4px; margin-left: 5px; }
.first { margin-left: 7px; }
.apptitle { position: absolute; left: 0; right: 0; margin-left: 314px; text-align: center; pointer-events: none; }
.brand { margin-left: auto; font: 800 13px/16px "Open Sans", sans-serif; color: #13858b; }
.winctl { display: flex; gap: 10px; margin: 0 7px 0 24px; }

/* Ribbon tabs */
.tabs { display: flex; height: 25px; background: #dcdcdc; }
.tab { padding: 0 13px; }
.tab.file { width: 55px; background: #4f9bbd; color: #fff; margin-right: 1px; }
.tab.active { background: #fff; color: #1f647f; }
.tabtools { margin-left: auto; display: flex; align-items: center; gap: 11px; padding-right: 8px; }
.search { display: flex; align-items: center; width: 106px; height: 16px; background: #fff; border: 1px solid #aaa; }
.search input { flex: 1; min-width: 0; padding: 0 0 0 2px; border: 0; background: none; font-size: 11px; }
.search input::placeholder { color: #aaa; opacity: 1; }
.help { width: 14px; height: 14px; border-radius: 7px; background: #3d68bd; color: #fff; font-weight: bold; }

/* Ribbon */
.ribbon { display: flex; height: 79px; background: #fff; border-bottom: 1px solid #d5dadd; font-size: 10px; line-height: 12px; }
.group { display: flex; flex-direction: column; border-right: 1px solid #dadada; margin: 4px 0 0; }
.gbody { flex: 1; display: flex; }
.glabel { position: relative; height: 12px; margin-bottom: 1px; text-align: center; color: #1f647f; }
.glabel .caret { position: absolute; right: 7px; top: 4px; }
.g-window { width: 147px; }
.g-window .gbody { padding-left: 8px; }
.g-window .glabel { padding-right: 14px; }
.g-zoom { width: 75px; }
.g-vis { width: 338px; }
.g-vis .gbody { padding-left: 8px; }
.g-vis .glabel { padding-right: 12px; }
.g-viz { width: 311px; }
.g-viz .gbody { padding-left: 8px; }
.g-viz .glabel { padding-right: 14px; }
.g-true { width: 57px; padding-left: 4px; }
.big { flex: none; display: flex; flex-direction: column; justify-content: flex-start; align-items: center; text-align: center; white-space: nowrap; }
.big .caret { display: inline-block; vertical-align: middle; }
.w40 { width: 40px; } .w43 { width: 43px; } .w50 { width: 50px; } .w62 { width: 62px; }
.more { flex: 1; padding-left: 4px; }
.pic { display: flex; align-items: center; justify-content: center; height: 32px; margin-bottom: 3px; }
.big .low { margin-top: 4px; }
.boxed { width: 35px; border: 1px solid #ddd; border-radius: 3px; }
.png { flex-direction: column; align-items: flex-end; color: #41317c; }
.png b { font: bold 14px/18px "Liberation Sans", sans-serif; }
.layouts { display: grid; grid-template-columns: repeat(3, 13px); gap: 8px 10px; align-content: start; padding: 1px 0 0 12px; }
.layouts svg { width: 13px; height: 13px; fill: none; stroke: #a8a8a8; }
.col { display: flex; flex-direction: column; align-items: flex-start; }
.row { gap: 4px; height: 20px; white-space: nowrap; }
.g-zoom .gbody { padding: 3px 0 0 12px; }
.zoomval { width: 51px; height: 17px; margin-top: 14px; padding: 0 3px; border: 1px solid #999; }
.layercol { width: 90px; margin-left: 6px; padding-top: 1px; }
.layercol .row { margin-left: 1px; }
.layer { margin-bottom: 4px; }
.vizcol { margin-left: 5px; gap: 1px; }
.vizcol .row { height: 19px; margin-bottom: 1px; }
.vizcol .row:first-child { height: 16px; }
.off { color: #b5b5b5; }
.overflow { margin-left: auto; align-self: flex-end; padding: 6px; }

.selwrap { position: relative; display: flex; }
.selwrap::after { content: ""; position: absolute; right: 5px; top: 6px; border: 3px solid transparent; border-top: 4px solid #111; border-bottom: 0; pointer-events: none; }
.selwrap select { appearance: none; width: 100%; height: 16px; padding: 0 4px; border: 1px solid #8f8f8f; border-radius: 0; background: #fff; font-size: 10px; }
.layer { width: 45px; }

/* Selection bar */
.selbar { display: flex; align-items: center; height: 28px; background: #fff; border-bottom: 1px solid #b5b5b5; }
.menu { width: 58px; margin-left: 8px; }
.filter { width: 114px; margin: 2px 0 0 16px; }
.scope { width: 119px; margin: 2px 0 0 8px; }
.run { display: flex; align-items: center; justify-content: space-between; }
.run svg { width: 15px; height: 15px; }
.run .caret { width: 6px; height: 4px; }
.r1 { width: 175px; margin-left: 8px; }
.r2 { width: 365px; margin: 0 10px 0 8px; }
.r3 { width: 250px; margin: 0 8px 0 11px; }

/* Work area */
.work { position: relative; flex: 1; min-height: 0; display: flex; background: #fff; }
.rail { width: 30px; background: #dadada; border-right: 1px solid #bbb; display: flex; flex-direction: column; }
.rail button { width: 29px; height: 26px; padding-left: 4px; }
.rail > button { padding: 0; }
.railgrp { display: flex; flex-direction: column; }
.a { margin-top: 21px; gap: 13px; }
.b { margin-top: 26px; gap: 24px; }
.c { margin-top: 14px; gap: 13px; }
.rail .on { width: 28px; height: 42px; margin: -8px 0 -8px 2px; padding-left: 2px; background: #fff; }

.nav { width: 445px; padding: 0 9px 5px 6px; display: flex; flex-direction: column; }
.navhead { display: flex; justify-content: space-between; align-items: center; height: 28px; padding: 0 6px 0 3px; }
.maxbox { width: 12px; height: 11px; border: 1px solid #111; border-top-width: 2px; }
.tree { flex: 1; min-height: 0; overflow: hidden; display: flex; border: 1px solid #ddd; border-bottom: 0; background: #fff; }
table { flex: 1; width: 100%; min-width: 0; border-collapse: separate; border-spacing: 0; table-layout: fixed; align-self: flex-start; }
.c1 { width: 189px; } .c2 { width: 93px; } .c3 { width: 93px; }
th { height: 18px; padding: 0 5px; text-align: left; font-weight: normal; background: #f1f1f1; border-right: 1px solid #d5d5d5; border-bottom: 1px solid #ddd; }
td { height: 19px; padding: 0 5px; border-right: 1px solid #e2e2e2; border-bottom: 1px solid #eee; }
tbody tr:nth-child(4n) td { height: 18px; }
tbody tr:nth-child(even) td { background: #fafafa; }
td:first-child { padding: 0; }
th:last-child, td:last-child { border-right: 0; }
.sort { display: inline-block; width: 10px; height: 6px; margin-left: 14px; vertical-align: 2px; }
.cell { display: flex; align-items: center; height: 100%; white-space: nowrap; }
.top { margin-left: 5px; background: repeating-linear-gradient(#aaa 0 1px, transparent 1px 3px) 4px 0 / 1px 100% no-repeat; }
.last { background-size: 1px 50%; }
.sub { margin-left: 27px; border-left: 1px dotted #aaa; }
.sub::before { content: ""; width: 7px; margin-right: 2px; border-top: 1px dotted #aaa; }
.exp { flex: none; width: 9px; height: 9px; margin-right: 3px; border: 1px dotted #bbb; background: #fff; font: bold 10px/7px "Liberation Sans", sans-serif; }
.ic { width: 15px; height: 14px; margin-right: 3px; }
.tk { width: 12px; height: 12px; }
.top .tk { margin: 0 2px; }
.cell input { appearance: none; width: 12px; height: 12px; margin-right: 1px; flex: none; border: 1px solid #111; background: #fff url("data:image/svg+xml,%3Csvg xmlns='http://www.w3.org/2000/svg' viewBox='0 0 10 10'%3E%3Cpath d='M1 5l2-1 1.500 2.500Q6 2.500 9.500 1 6 5 4.500 9z' fill='%2319a447' stroke='%230d7a30' stroke-width='.5'/%3E%3C/svg%3E"); }
.cell label { flex: 1; align-self: stretch; display: flex; align-items: center; margin-left: -2px; padding-left: 2px; }
.red label { color: #b8646a; }
.blue label { color: #42458f; }
.sel label, tbody tr.sel td:nth-child(2), tbody tr.sel td:nth-child(3) { background: #7db3c8; }
.scroll { flex: none; width: 15px; padding-top: 18px; display: flex; flex-direction: column; background: #f1f1f1; margin-right: 2px; }
.scroll button { height: 18px; }
.thumb { flex: 1; margin-bottom: 16px; background: #cdcdcd; }
.splitter { height: 4px; margin-bottom: 2px; border: 1px solid #aaa; background: #ddd; }
.fold { justify-content: space-between; height: 22px; padding: 1px 6px 0; font-size: 12px; color: #1f5872; border-bottom: 2px solid #c9c9c9; }

.view { flex: 1; min-width: 0; display: flex; flex-direction: column; border-left: 1px solid #8a8f93; background: linear-gradient(#b0b4b8, #c5c8cc 25%, #d7dade 55%, #e5e8eb 90%); }
.doctabs { display: flex; height: 20px; background: #fff; border-bottom: 2px solid #4a93ad; }
.doctab { display: flex; align-items: center; gap: 5px; padding: 0 5px; background: #4f9bbd; color: #fff; }
.canvas { flex: 1; min-height: 0; width: 100%; }
.axes { font: 12px "Noto Sans", sans-serif; }

/* Immediate Hide dialog floats over the navigator and the view */
.dialog { position: absolute; left: 280px; top: 58px; width: 284px; background: #f1f1f1; border: 1px solid #d5d5d5; border-top: 0; }
.dhead { display: flex; align-items: center; gap: 7px; height: 22px; padding: 0 8px 0 5px; background: #4f9bbd; color: #fff; }
.dhead h2 { flex: 1; font-size: 12px; }
.dpanel { margin: 3px 4px 0; padding: 0 7px 8px; background: #fff; border-bottom: 2px solid #ccc; }
.dfold { width: 100%; height: 26px; justify-content: space-between; font-size: 12px; color: #1f647f; }
.pickrow { display: flex; gap: 3px; margin: 2px 0 0 1px; }
.picklabel { flex: 1; display: flex; align-items: center; gap: 5px; height: 30px; padding-left: 2px; background: #ffdc73; }
.target { width: 30px; height: 30px; background: #ffdc73; }
.target svg { width: 24px; height: 24px; padding: 1px; border: 1px dotted #222; }
.dfoot { display: flex; justify-content: flex-end; padding: 10px 14px 9px; }
.dfoot button { width: 62px; height: 21px; background: #6cacc8; color: #fff; }

.status { position: relative; height: 21px; padding: 1px 3px; background: #fff; border-top: 1px solid #999; font: 600 10px/16px "Open Sans", sans-serif; color: #111; }
.micad { position: absolute; right: 2px; bottom: 0; width: 128px; height: 49px; background: #fff; }
.mi { font: italic bold 32px "Liberation Sans", sans-serif; fill: #34438f; }
```
